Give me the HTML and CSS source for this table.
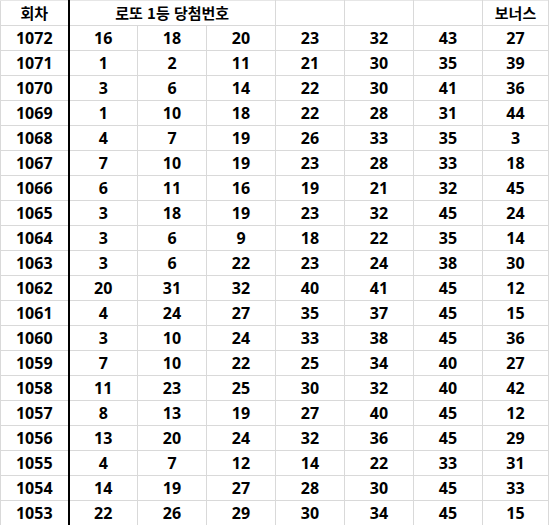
FILE: index.html
```html
<!DOCTYPE html>
<html lang="ko">
<head>
<meta charset="utf-8">
<link rel="stylesheet" href="styles.css">
</head>
<body>
<table class="sheet">
<colgroup>
<col class="c-round"><col class="c-num"><col class="c-num"><col class="c-num"><col class="c-num"><col class="c-num"><col class="c-num"><col class="c-bonus">
</colgroup>
<thead>
<tr><th class="round">회차</th><th colspan="3">로또 1등 당첨번호</th><th></th><th></th><th></th><th>보너스</th></tr>
</thead>
<tbody>
<tr><td class="round">1072</td><td>16</td><td>18</td><td>20</td><td>23</td><td>32</td><td>43</td><td>27</td></tr>
<tr><td class="round">1071</td><td>1</td><td>2</td><td>11</td><td>21</td><td>30</td><td>35</td><td>39</td></tr>
<tr><td class="round">1070</td><td>3</td><td>6</td><td>14</td><td>22</td><td>30</td><td>41</td><td>36</td></tr>
<tr><td class="round">1069</td><td>1</td><td>10</td><td>18</td><td>22</td><td>28</td><td>31</td><td>44</td></tr>
<tr><td class="round">1068</td><td>4</td><td>7</td><td>19</td><td>26</td><td>33</td><td>35</td><td>3</td></tr>
<tr><td class="round">1067</td><td>7</td><td>10</td><td>19</td><td>23</td><td>28</td><td>33</td><td>18</td></tr>
<tr><td class="round">1066</td><td>6</td><td>11</td><td>16</td><td>19</td><td>21</td><td>32</td><td>45</td></tr>
<tr><td class="round">1065</td><td>3</td><td>18</td><td>19</td><td>23</td><td>32</td><td>45</td><td>24</td></tr>
<tr><td class="round">1064</td><td>3</td><td>6</td><td>9</td><td>18</td><td>22</td><td>35</td><td>14</td></tr>
<tr><td class="round">1063</td><td>3</td><td>6</td><td>22</td><td>23</td><td>24</td><td>38</td><td>30</td></tr>
<tr><td class="round">1062</td><td>20</td><td>31</td><td>32</td><td>40</td><td>41</td><td>45</td><td>12</td></tr>
<tr><td class="round">1061</td><td>4</td><td>24</td><td>27</td><td>35</td><td>37</td><td>45</td><td>15</td></tr>
<tr><td class="round">1060</td><td>3</td><td>10</td><td>24</td><td>33</td><td>38</td><td>45</td><td>36</td></tr>
<tr><td class="round">1059</td><td>7</td><td>10</td><td>22</td><td>25</td><td>34</td><td>40</td><td>27</td></tr>
<tr><td class="round">1058</td><td>11</td><td>23</td><td>25</td><td>30</td><td>32</td><td>40</td><td>42</td></tr>
<tr><td class="round">1057</td><td>8</td><td>13</td><td>19</td><td>27</td><td>40</td><td>45</td><td>12</td></tr>
<tr><td class="round">1056</td><td>13</td><td>20</td><td>24</td><td>32</td><td>36</td><td>45</td><td>29</td></tr>
<tr><td class="round">1055</td><td>4</td><td>7</td><td>12</td><td>14</td><td>22</td><td>33</td><td>31</td></tr>
<tr><td class="round">1054</td><td>14</td><td>19</td><td>27</td><td>28</td><td>30</td><td>45</td><td>33</td></tr>
<tr><td class="round">1053</td><td>22</td><td>26</td><td>29</td><td>30</td><td>34</td><td>45</td><td>15</td></tr>
</tbody>
</table>
</body>
</html>
```
FILE: styles.css
```css
html, body {
  margin: 0;
  padding: 0;
  background: #ffffff;
}
.sheet {
  border-collapse: collapse;
  table-layout: fixed;
  width: 548px;
  font-family: "Open Sans", "Noto Sans CJK KR", sans-serif;
  font-weight: 700;
  font-size: 16px;
  color: #000;
}
.c-round { width: 68px; }
.c-num { width: 69px; }
.c-bonus { width: 66px; }
.sheet th,
.sheet td {
  height: 24px;
  padding: 0;
  border: 1px solid #d9d9d9;
  text-align: center;
  vertical-align: middle;
  line-height: 24px;
  font-weight: 700;
  white-space: nowrap;
  overflow: hidden;
}
.sheet thead th {
  font-family: "Noto Sans CJK KR", sans-serif;
  font-size: 15px;
  border-top: 1px solid #e6e6e6;
}
.sheet .round {
  border-right: 2px solid #000;
}
```
